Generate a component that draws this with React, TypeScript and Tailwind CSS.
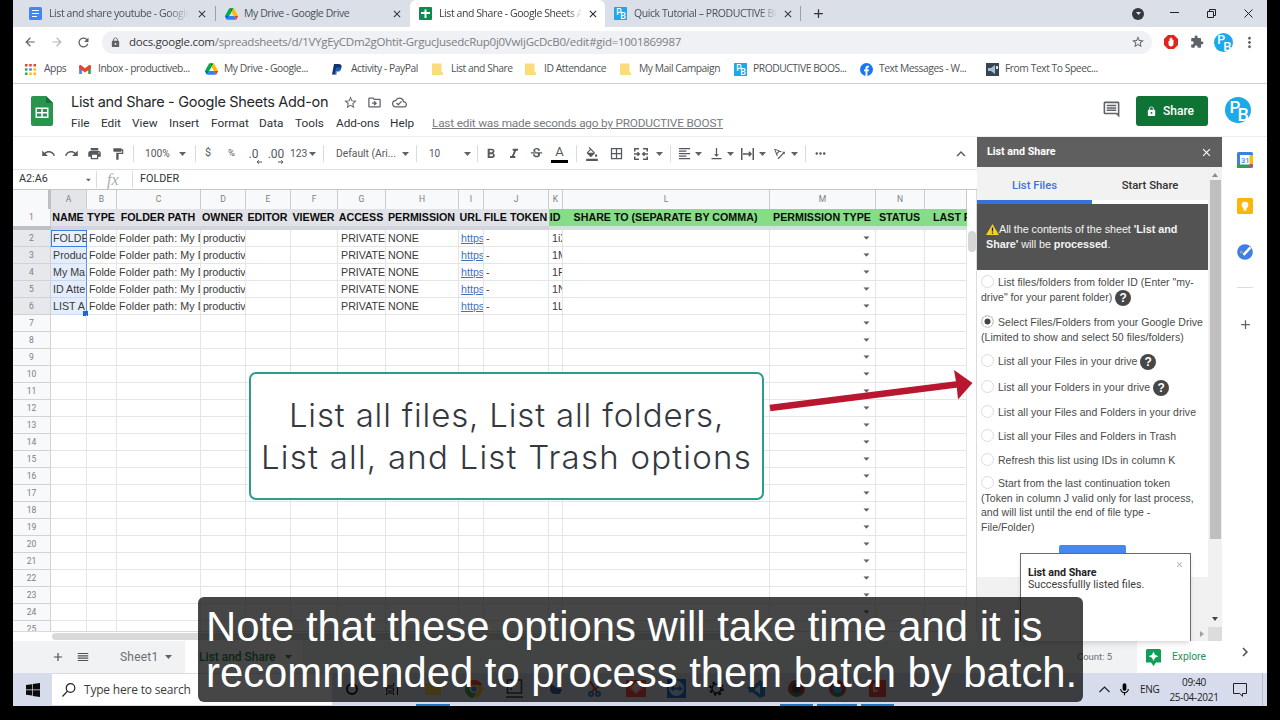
import type { ReactNode } from "react";
import { clsx } from "clsx";
import {
    MdAdd, MdArrowBack, MdArrowForward, MdBorderAll, MdClose, MdExtension, MdFormatAlignLeft, MdFormatBold,
    MdFormatColorFill, MdFormatItalic, MdFormatPaint, MdKeyboardArrowUp, MdChevronRight, MdLock, MdMoreVert,
    MdOutlineCloudDone, MdOutlineComment, MdOutlineDriveFileMove, MdPrint, MdRedo, MdRefresh, MdReorder,
    MdStarBorder, MdStrikethroughS, MdTextRotationAngleup, MdUndo, MdVerticalAlignBottom, MdMoreHoriz, MdMic,
} from "react-icons/md";

const COLS = "grid grid-cols-[38px_36px_30px_84px_45px_45px_47px_48px_73px_25px_65px_14px_207px_106px_49px_42px]";

const letters = ["A", "B", "C", "D", "E", "F", "G", "H", "I", "J", "K", "L", "M", "N", ""];

const headings = [
    "NAME", "TYPE", "FOLDER PATH", "OWNER", "EDITOR", "VIEWER", "ACCESS", "PERMISSION", "URL", "FILE TOKEN",
    "ID", "SHARE TO (SEPARATE BY COMMA)", "PERMISSION TYPE", "STATUS", "LAST R",
];

const names = ["FOLDE", "Produc", "My Ma", "ID Atte", "LIST A"];
const ids = ["1iX", "1M", "1F", "1N", "1L"];

function Caret({ className }: { className?: string }) {
    return (
        <span className={clsx("flex w-3 shrink-0 justify-center", className)}>
            <svg width="7" height="4" viewBox="0 0 7 4" fill="#5f6368"><path d="M0 0h7L3.5 4z" /></svg>
        </span>
    );
}

function Sep({ className }: { className?: string }) {
    return <span className={clsx("h-[17px] w-px shrink-0 bg-[#dadce0]", className)} />;
}

function Tool({ className, children }: { className: string; children: ReactNode }) {
    return <span className={clsx("flex shrink-0 items-center justify-center", className)}>{children}</span>;
}

function DriveIcon() {
    return (
        <svg width="13" height="12" viewBox="0 0 87 78" className="shrink-0">
            <path d="M6.6 66.9l3.8 6.6c.8 1.4 1.9 2.5 3.3 3.3L27.5 53H0c0 1.6.4 3.1 1.2 4.5z" fill="#0066da" />
            <path d="M43.6 25L29.9 1.2c-1.3.8-2.5 1.9-3.3 3.3L1.2 48.5C.4 49.9 0 51.500 0 53h27.500z" fill="#00ac47" />
            <path d="M73.600 76.800c1.300-.8 2.500-1.900 3.300-3.300l9.200-16c.8-1.400 1.200-2.900 1.200-4.500H59.800l5.900 11.500z" fill="#ea4335" />
            <path d="M43.600 25L57.400 1.200C56 .4 54.500 0 52.900 0H34.400c-1.600 0-3.200.4-4.500 1.200z" fill="#00832d" />
            <path d="M59.800 53H27.500L13.700 76.800c1.400.8 2.900 1.200 4.500 1.200h50.900c1.600 0 3.100-.4 4.500-1.200z" fill="#2684fc" />
            <path d="M73.400 26.500L60.700 4.500c-.8-1.400-2-2.500-3.300-3.300L43.600 25l16.200 28h27.500c0-1.600-.4-3.100-1.200-4.500z" fill="#ffba00" />
        </svg>
    );
}

function PbIcon({ size, round }: { size: number; round?: boolean }) {
    return (
        <svg width={size} height={size} viewBox="0 0 26 26" className="shrink-0">
            <rect width="26" height="26" rx={round ? 13 : 1} fill="#1ba9ea" />
            <text x="4.500" y="15.500" fontFamily="Roboto, sans-serif" fontWeight="500" fontSize="17" fill="#fff">P</text>
            <text x="12.500" y="24" fontFamily="Roboto, sans-serif" fontWeight="500" fontSize="18" fill="#fff">B</text>
        </svg>
    );
}

function FolderIcon() {
    return (
        <svg width="11" height="12" viewBox="0 0 11 12" className="shrink-0">
            <path d="M0 .5h9.500v8.500l1.500.5V12H0z" fill="#fbdc7a" />
        </svg>
    );
}

function TabTitle({ className, children }: { className: string; children: ReactNode }) {
    return (
        <span className={clsx("shrink-0 overflow-hidden whitespace-nowrap text-[10.5px] tracking-[-0.42px]", className)}>{children}</span>
    );
}

function TabStrip() {
    return (
        <div className="flex h-[27px] items-center bg-[#dadfe8] font-['Open_Sans',sans-serif] text-[#4d5156]">
            <svg width="13" height="13" viewBox="0 0 13 13" className="ml-4 shrink-0">
                <rect width="13" height="13" rx="1.500" fill="#4285f4" />
                <path d="M3 3.500h7M3 6.500h7M3 9.500h5" stroke="#fff" strokeWidth="1.200" />
            </svg>
            <TabTitle className="ml-[7px] w-[140px] [mask-image:linear-gradient(to_right,#000_85%,transparent)]">List and share youtube - Google</TabTitle>
            <MdClose className="ml-[7px] shrink-0 text-[12px] text-[#333]" />
            <span className="ml-[7px] h-[15px] w-px bg-[#9aa0a6]" />
            <span className="ml-[9px]"><DriveIcon /></span>
            <TabTitle className="ml-[6px] w-[147px]">My Drive - Google Drive</TabTitle>
            <MdClose className="shrink-0 text-[12px] text-[#333]" />
            <div className="ml-[7px] flex h-full w-[195px] shrink-0 items-center rounded-t-md bg-white text-[#3c4043]">
                <svg width="13" height="13" viewBox="0 0 13 13" className="ml-[9px] shrink-0">
                    <rect width="13" height="13" rx="1" fill="#0f8a50" />
                    <path d="M2 6h9M6.500 2.500v8.500" stroke="#fff" strokeWidth="2" />
                </svg>
                <TabTitle className="ml-[7px] w-[143px] [mask-image:linear-gradient(to_right,#000_90%,transparent)]">List and Share - Google Sheets A</TabTitle>
                <MdClose className="ml-[5px] shrink-0 text-[12px] text-[#222]" />
            </div>
            <span className="ml-[9px]"><PbIcon size={13} /></span>
            <TabTitle className="ml-[7px] w-[143px] [mask-image:linear-gradient(to_right,#000_88%,transparent)]">Quick Tutorial – PRODUCTIVE BO</TabTitle>
            <MdClose className="ml-[5px] shrink-0 text-[12px] text-[#333]" />
            <span className="ml-[6px] h-[15px] w-px bg-[#9aa0a6]" />
            <MdAdd className="ml-[10px] text-[15px] text-[#333]" />
            <span className="ml-auto flex size-3 items-center justify-center rounded-full bg-[#35383c]">
                <svg width="5" height="3" viewBox="0 0 5 3" fill="#dfe3ea"><path d="M0 0h5L2.500 3z" /></svg>
            </span>
            <svg width="9" height="9" className="mr-[28px] ml-[26px]" stroke="#222"><path d="M0 3.500h9" /></svg>
            <svg width="9" height="9" className="mr-[28px]" fill="none" stroke="#222"><path d="M.5 2.500h6v6h-6zM2.500 2V.5h6v6H7" /></svg>
            <svg width="9" height="9" className="mr-[14px]" stroke="#222"><path d="M.5.5l8 8M8.500.5l-8 8" /></svg>
        </div>
    );
}

function AddressBar() {
    return (
        <div className="flex h-[30px] items-center bg-white font-['Open_Sans',sans-serif] text-[#5f6368]">
            <MdArrowBack className="ml-[10px] text-[14px]" />
            <MdArrowForward className="ml-[13px] text-[14px] text-[#b4b7bb]" />
            <MdRefresh className="ml-[12px] text-[15px]" />
            <div className="ml-[11px] flex h-[23px] w-[1050px] items-center rounded-full bg-[#f0f1f4]">
                <MdLock className="ml-[8px] text-[11px]" />
                <span className="ml-[8px] text-[11.5px] tracking-[-0.27px] whitespace-nowrap text-[#7a7e83]">
                    <span className="text-[#35383c]">docs.google.com</span>/spreadsheets/d/1VYgEyCDm2gOhtit-GrgucJusedcRup0j0VwIjGcDcB0/edit#gid=1001869987
                </span>
                <MdStarBorder className="mr-[7px] ml-auto text-[14px]" />
            </div>
            <svg width="14" height="14" viewBox="0 0 14 14" className="ml-[12px]">
                <path d="M4 0h6l4 4v6l-4 4H4L0 10V4z" fill="#e1251b" />
                <path d="M4.500 6h1V3.500h1v-1h1v1h1v1.500h1v4c0 1.500-1 2.500-2.500 2.500S4.500 10.500 4.500 9z" fill="#fff" />
            </svg>
            <MdExtension className="ml-[12px] text-[14px]" />
            <span className="ml-[10px]"><PbIcon size={19} round /></span>
            <MdMoreVert className="ml-[8px] text-[17px]" />
        </div>
    );
}

function Bookmark({ className, icon, children }: { className: string; icon: ReactNode; children: ReactNode }) {
    return (
        <span className={clsx("flex shrink-0 items-center whitespace-nowrap", className)}>
            <span className="flex w-[19px] shrink-0">{icon}</span>
            {children}
        </span>
    );
}

function Bookmarks() {
    return (
        <div className="flex h-[27px] items-center border-b border-[#cfd1d4] bg-white pb-[2px] pl-3 font-['Open_Sans',sans-serif] text-[10.3px] tracking-[-0.45px] text-[#4f5357]">
            <Bookmark className="w-[54px]" icon={
                <svg width="11" height="11" viewBox="0 0 11 11">
                    <path d="M0 0h2.500v2.500H0zM8.500 0H11v2.500H8.500zM4.250 0h2.500v2.500h-2.500z" fill="#ea4335" />
                    <path d="M0 4.250h2.500v2.500H0z" fill="#34a853" /><path d="M4.250 4.250h2.500v2.500h-2.500z" fill="#4285f4" />
                    <path d="M8.500 4.250H11v2.500H8.500zM4.250 8.500h2.500V11h-2.500zM8.500 8.500H11V11H8.500z" fill="#fbbc04" />
                    <path d="M0 8.500h2.500V11H0z" fill="#34a853" />
                </svg>
            }>Apps</Bookmark>
            <Bookmark className="w-[126px]" icon={
                <svg width="12" height="9" viewBox="0 0 13 10">
                    <path d="M0 1h3v9H0z" fill="#4285f4" /><path d="M10 1h3v9h-3z" fill="#34a853" />
                    <path d="M0 1.500C0 0 1.500-.3 2.500.6l4 3 4-3c1-.9 2.500-.6 2.500.9V4L6.500 8.200 0 4z" fill="#ea4335" />
                </svg>
            }>Inbox - productiveb...</Bookmark>
            <Bookmark className="w-[127px]" icon={<DriveIcon />}>My Drive - Google...</Bookmark>
            <Bookmark className="w-[100px]" icon={
                <svg width="10" height="11" viewBox="0 0 10 11">
                    <path d="M2 0h4.500C9 0 10 1.500 9.500 3.500 9 6 7.500 7 5 7H4l-.7 3.500H0z" fill="#15306e" />
                    <path d="M4 3.500h5c.5 3-1 4.500-4 4.500l-.6 3H2.500z" fill="#1c73c4" opacity=".7" />
                </svg>
            }>Activity - PayPal</Bookmark>
            <Bookmark className="w-[93px]" icon={<FolderIcon />}>List and Share</Bookmark>
            <Bookmark className="w-[95px]" icon={<FolderIcon />}>ID Attendance</Bookmark>
            <Bookmark className="w-[114px]" icon={<FolderIcon />}>My Mail Campaign</Bookmark>
            <Bookmark className="w-[126px]" icon={<PbIcon size={13} />}>PRODUCTIVE BOOS...</Bookmark>
            <Bookmark className="w-[126px]" icon={
                <svg width="13" height="13" viewBox="0 0 13 13">
                    <circle cx="6.500" cy="6.500" r="6.500" fill="#1877f2" />
                    <path d="M5.500 13V8.300H4V6.500h1.500V5.200c0-1.600.9-2.400 2.300-2.400h1.300v1.600h-.8c-.7 0-.9.4-.9.9v1.200H9l-.3 1.800H7.400V13z" fill="#fff" />
                </svg>
            }>Text Messages - W...</Bookmark>
            <Bookmark className="" icon={
                <svg width="13" height="13" viewBox="0 0 13 13">
                    <rect width="13" height="13" fill="#3b4250" />
                    <path d="M2 5h3l4-3v9L5 8H2z" fill="#9fc3d6" /><path d="M10 3h2v3h-2z" fill="#dfe6ea" />
                </svg>
            }>From Text To Speec...</Bookmark>
        </div>
    );
}

function DocHeader() {
    return (
        <div className="flex h-[53px] border-b border-[#eceded] bg-white">
            <svg width="22" height="30" viewBox="0 0 22 30" className="mt-[12px] ml-[18px] shrink-0">
                <path d="M2 0h13l7 7v21c0 1.100-.9 2-2 2H2c-1.100 0-2-.9-2-2V2C0 .9.900 0 2 0z" fill="#28954f" />
                <path d="M15 0l7 7h-7z" fill="#17713a" />
                <path d="M4.500 11.500h13v10.500h-13zM6 13v3h4.300v-3zm5.800 0v3H16v-3zM6 17.500v3h4.300v-3zm5.800 0v3H16v-3z" fill="#fff" fillRule="evenodd" />
            </svg>
            <div className="ml-[18px] flex flex-1 flex-col">
                <div className="mt-[7px] flex h-[21px] items-center">
                    <span className="w-[272px] font-['Inter',sans-serif] text-[14.5px] tracking-[-0.3px] whitespace-nowrap text-[#26282b]">List and Share - Google Sheets Add-on</span>
                    <MdStarBorder className="mt-px text-[15px] text-[#5f6368]" />
                    <span className="mt-px ml-[9px] text-[15px] text-[#5f6368]"><MdOutlineDriveFileMove /></span>
                    <MdOutlineCloudDone className="mt-px ml-[10px] text-[15px] text-[#5f6368]" />
                </div>
                <div className="mt-[3px] flex h-[18px] items-center font-['Roboto',sans-serif] text-[11.8px] whitespace-nowrap text-[#303336]">
                    <span className="w-[30px]">File</span>
                    <span className="w-[31px]">Edit</span>
                    <span className="w-[37px]">View</span>
                    <span className="w-[42px]">Insert</span>
                    <span className="w-[48px]">Format</span>
                    <span className="w-[36px]">Data</span>
                    <span className="w-[41px]">Tools</span>
                    <span className="w-[54px]">Add-ons</span>
                    <span className="w-[42px]">Help</span>
                    <span className="tracking-[-0.2px] text-[#777b80] underline">Last edit was made seconds ago by PRODUCTIVE BOOST</span>
                </div>
            </div>
            <MdOutlineComment className="mt-[16px] mr-[15px] text-[19px] text-[#5f6368]" />
            <div className="mt-[12px] mr-[17px] flex h-[30px] w-[72px] items-center rounded-[3px] bg-[#107336] font-['Roboto',sans-serif] text-[12px] font-medium text-white">
                <MdLock className="mr-[6px] ml-[10px] text-[11px]" />
                Share
            </div>
            <span className="mt-[13px] mr-4"><PbIcon size={26} round /></span>
        </div>
    );
}

function Toolbar() {
    return (
        <div className="flex h-[33px] items-center border-b border-[#dfe1e4] bg-white pt-px pl-6 font-['Roboto',sans-serif] text-[10.8px] text-[#55595e]">
            <Tool className="w-[23px]"><MdUndo className="text-[15px]" /></Tool>
            <Tool className="w-[23px]"><MdRedo className="text-[15px]" /></Tool>
            <Tool className="w-[23px]"><MdPrint className="text-[15px]" /></Tool>
            <Tool className="w-[23px]"><MdFormatPaint className="text-[14px]" /></Tool>
            <Sep className="ml-1" />
            <span className="ml-[11px] w-[31px] text-[10.3px]">100%</span>
            <Caret />
            <Sep className="ml-[7px]" />
            <Tool className="w-6">$</Tool>
            <Tool className="w-[23px] text-[9.500px]">%</Tool>
            <Tool className="w-[21px] text-[12px]">
                <span className="relative">.0<svg width="6" height="4" className="absolute -right-1 bottom-[-1px]" stroke="#55595e" fill="none"><path d="M6 2H1M3 .3L1 2l2 1.700" /></svg></span>
            </Tool>
            <Tool className="w-[24px] text-[12px]">
                <span className="relative">.00<svg width="6" height="4" className="absolute right-0 bottom-[-1px]" stroke="#55595e" fill="none"><path d="M0 2h5M3 .3L5 2 3 3.700" /></svg></span>
            </Tool>
            <span className="ml-[2px] w-4 text-[10.3px]">123</span>
            <Caret />
            <Sep className="ml-[5px]" />
            <span className="ml-3 w-[63px] whitespace-nowrap text-[10.3px]">Default (Ari...</span>
            <Caret />
            <Sep className="ml-[5px]" />
            <span className="ml-3 w-8 text-[10px]">10</span>
            <Caret />
            <Sep className="ml-[4px]" />
            <Tool className="ml-px w-[23px]"><MdFormatBold className="text-[16px]" /></Tool>
            <Tool className="w-[23px]"><MdFormatItalic className="text-[16px]" /></Tool>
            <Tool className="w-[23px]"><MdStrikethroughS className="text-[15px]" /></Tool>
            <Tool className="w-[23px]">
                <span className="flex h-[19px] w-[17px] flex-col items-center border-b-[3px] border-black text-[13px] leading-[15px]">A</span>
            </Tool>
            <Sep className="ml-[5px]" />
            <Tool className="ml-[2px] w-[25px]"><MdFormatColorFill className="text-[14px]" /></Tool>
            <Tool className="w-[25px]"><MdBorderAll className="text-[15px]" /></Tool>
            <Tool className="w-6">
                <svg width="14" height="12" viewBox="0 0 14 12" fill="none" stroke="#55595e" strokeWidth="1.500">
                    <path d="M5 .75H.75V3.500M9 .75h4.250V3.500M5 11.250H.75V8.500M9 11.250h4.250V8.500M0 6h5M3.500 4.200L5.300 6 3.500 7.800M14 6H9M10.500 4.200L8.700 6l1.800 1.800" />
                </svg>
            </Tool>
            <Caret />
            <Sep className="ml-[5px]" />
            <Tool className="ml-[5px] w-4"><MdFormatAlignLeft className="text-[15px]" /></Tool>
            <Caret />
            <Tool className="ml-1 w-4"><MdVerticalAlignBottom className="text-[15px]" /></Tool>
            <Caret />
            <Tool className="ml-[3px] w-4">
                <svg width="13" height="12" viewBox="0 0 13 12" fill="none" stroke="#55595e" strokeWidth="1.500">
                    <path d="M.75 0v12M12.250 0v12M2 6h8M7.800 3.800L10 6 7.800 8.200" />
                </svg>
            </Tool>
            <Caret className="ml-px" />
            <Tool className="ml-[3px] w-4"><MdTextRotationAngleup className="text-[15px]" /></Tool>
            <Caret className="ml-px" />
            <Sep className="ml-[5px]" />
            <Tool className="ml-1 w-5"><MdMoreHoriz className="text-[15px]" /></Tool>
            <MdKeyboardArrowUp className="mr-[7px] ml-auto text-[18px]" />
        </div>
    );
}

function FormulaBar() {
    return (
        <div className="flex h-5 items-center border-b border-[#c4c7ca] bg-white font-['Roboto',sans-serif] text-[10.8px] text-[#303336]">
            <span className="ml-[6px] w-[63px]">A2:A6</span>
            <Caret className="scale-75" />
            <Sep className="ml-[2px]" />
            <span className="ml-[10px] w-[25px] font-['Liberation_Serif',serif] text-[16px] italic leading-none text-[#a9acb0]">fx</span>
            <Sep />
            <span className="ml-[7px]">FOLDER</span>
        </div>
    );
}

const cell = "overflow-hidden whitespace-nowrap border-r border-b border-[#e4e5e7]";

function Rows() {
    return (
        <>
            {Array.from({ length: 24 }, (_, i) => {
                const row = i + 2;
                const filled = i < 5;
                return (
                    <div key={row} className={clsx(COLS, "h-[17px] shrink-0 font-['Liberation_Sans',sans-serif] text-[10.7px] leading-[16px] text-[#3a3a3a]")}>
                        <span className={clsx("border-r border-b border-[#d0d2d5] text-center font-['Roboto',sans-serif] text-[8.5px] leading-[16px] text-[#7b7f84]", filled ? "bg-[#e6e8ec]" : "bg-[#f8f9fa]")}>{row}</span>
                        <span className={clsx(
                            "relative border-r border-b",
                            i === 0 && "border border-t-[1.5px] border-[#3d7fe0] bg-[#e8f0fc] pl-px leading-[14px]",
                            i > 0 && filled && "border-r-[#5a93e6] border-b-[#c9d9ef] bg-[#e3edfb] pl-[2px]",
                            !filled && "border-[#e4e5e7]",
                        )}>
                            <span className="block overflow-hidden whitespace-nowrap">{filled && names[i]}</span>
                            {i === 4 && <span className="absolute -right-[2px] -bottom-[2px] size-[5px] bg-[#1a66d6]" />}
                        </span>
                        <span className={clsx(cell, "pl-[2px]")}>{filled && "Folde"}</span>
                        <span className={clsx(cell, "pl-[2px] tracking-[0.1px]")}>{filled && "Folder path: My Drive"}</span>
                        <span className={clsx(cell, "pl-[2px] tracking-[-0.1px]")}>{filled && "productive"}</span>
                        <span className={cell} />
                        <span className={cell} />
                        <span className={clsx(cell, "pl-[3px]")}>{filled && "PRIVATE"}</span>
                        <span className={clsx(cell, "pl-[2px]")}>{filled && "NONE"}</span>
                        <span className={clsx(cell, "pl-[2px] text-[#3f74c4] underline")}>{filled && "https"}</span>
                        <span className={clsx(cell, "pl-[2px]")}>{filled && "-"}</span>
                        <span className={clsx(cell, "pl-[3px]")}>{filled && ids[i]}</span>
                        <span className={cell} />
                        <span className={clsx(cell, "flex items-center justify-end pr-[3px]")}><Caret className="scale-90" /></span>
                        <span className={cell} />
                        <span className={cell} />
                    </div>
                );
            })}
        </>
    );
}

function Sheet() {
    return (
        <div className="flex h-[442px] overflow-hidden bg-white">
            <div className="flex w-[954px] shrink-0 flex-col overflow-hidden border-b border-[#d8dadd]">
                <div className={clsx(COLS, "h-[19px] shrink-0 font-['Roboto',sans-serif] text-[8.5px] leading-[19px] text-[#7b7f84]")}>
                    <span className="border-r-[3px] border-b border-[#bdbfc2] bg-[#f8f9fa]" />
                    {letters.map((l, i) => (
                        <span key={i} className={clsx("border-r border-b border-[#c9cbce] text-center", i === 0 ? "bg-[#e3e5e9]" : "bg-[#f8f9fa]")}>{l}</span>
                    ))}
                </div>
                <div className={clsx(COLS, "h-[17px] shrink-0 font-['Liberation_Sans',sans-serif] text-[10.7px] leading-[17px] font-bold text-[#0c0c0c]")}>
                    <span className="border-r border-[#d0d2d5] bg-[#f8f9fa] text-center font-['Roboto',sans-serif] text-[8.5px] leading-[17px] font-normal text-[#7b7f84]">1</span>
                    {headings.map((h, i) => (
                        <span
                            key={h}
                            className={clsx(
                                "flex overflow-hidden whitespace-nowrap",
                                i < 10 ? "bg-[#e1e2e7]" : "bg-[#85dd88]",
                                i === 14 ? "justify-start pl-[8px]" : "justify-center pr-[2px]",
                            )}
                        >
                            {h}
                        </span>
                    ))}
                </div>
                <div className="flex h-1 shrink-0">
                    <span className="w-[38px] bg-[#bdbfc3]" />
                    <span className="w-[498px] bg-[#d2d4de]" />
                    <span className="flex-1 bg-[#d0e4da]" />
                </div>
                <Rows />
            </div>
            <div className="flex flex-1 flex-col items-center border-r border-[#dcdcdc] bg-white pt-[41px]">
                <span className="h-[21px] w-2 rounded-full bg-[#d5d6d8]" />
            </div>
        </div>
    );
}

function Help() {
    return (
        <span className="ml-[3px] inline-flex size-4 items-center justify-center rounded-full bg-[#474747] align-middle text-[12px] leading-none font-bold text-white">?</span>
    );
}

function Option({ className, checked, children }: { className: string; checked?: boolean; children: ReactNode }) {
    return (
        <div className={clsx("pl-1", className)}>
            <span className={clsx(
                "mr-[4px] inline-block size-[13px] rounded-full border border-[#dcdcdc] align-[-2px]",
                checked ? "bg-[#444] shadow-[inset_0_0_0_2.5px_white]" : "bg-white",
            )} />
            {children}
        </div>
    );
}

function Sidebar() {
    return (
        <div className="relative flex w-[245px] shrink-0 flex-col bg-white">
            <div className="flex h-[30px] shrink-0 items-center bg-[#5f5f5f] pl-[10px] font-['Roboto',sans-serif] text-[10.7px] font-bold text-white">
                List and Share
                <MdClose className="mr-[9px] ml-auto text-[13px]" />
            </div>
            <div className="flex min-h-0 flex-1">
                <div className="flex w-[231px] flex-col bg-[#f1f1f1]">
                    <div className="flex h-[37px] shrink-0 bg-[#f2f2f2] text-center font-['Roboto',sans-serif] text-[11.3px] leading-[38px] font-medium text-[#333]">
                        <span className="w-[115px] border-b-4 border-[#3572dc] text-[#3f73dd]">List Files</span>
                        <span className="w-[116px] border-b-4 border-white">Start Share</span>
                    </div>
                    <div className="h-[66px] shrink-0 bg-[#535353] pt-[18px] pl-[9px] font-['Liberation_Sans',sans-serif] text-[10.8px] leading-[14.5px] tracking-[-0.05px] whitespace-nowrap text-[#f4f4f4]">
                        <svg width="13" height="11" viewBox="0 0 13 11" className="inline align-[-2px]">
                            <path d="M6.500 0L13 11H0z" fill="#f3cf1e" />
                            <path d="M6.500 3.500v4M6.500 8.500v1.200" stroke="#222" strokeWidth="1.300" />
                        </svg>
                        All the contents of the sheet <b>'List and</b><br />
                        <b>Share'</b> will be <b>processed</b>.
                    </div>
                    <div className="flex h-[307px] shrink-0 flex-col bg-white font-['Liberation_Sans',sans-serif] text-[10.5px] leading-[14.5px] tracking-[0.03px] whitespace-nowrap text-[#4a4a4a]">
                        <Option className="mt-[5px] h-[40px]">List files/folders from folder ID (Enter "my-<br />drive" for your parent folder)<Help /></Option>
                        <Option className="h-[39px]" checked>Select Files/Folders from your Google Drive<br />(Limited to show and select 50 files/folders)</Option>
                        <Option className="h-[26px]">List all your Files in your drive<Help /></Option>
                        <Option className="h-[25px]">List all your Folders in your drive<Help /></Option>
                        <Option className="h-[24px]">List all your Files and Folders in your drive</Option>
                        <Option className="h-[24px]">List all your Files and Folders in Trash</Option>
                        <Option className="h-[23px]">Refresh this list using IDs in column K</Option>
                        <Option className="h-[69px]">
                            Start from the last continuation token<br />(Token in column J valid only for last process,<br />and will list until the end of file type -<br />File/Folder)
                        </Option>
                        <span className="ml-[82px] h-8 w-[67px] rounded-[2px] bg-[#4688f1]" />
                    </div>
                </div>
                <div className="flex flex-1 flex-col items-center bg-[#f1f1f1]">
                    <svg width="6" height="4" viewBox="0 0 6 4" className="mt-[6px] mb-[3px]" fill="#8b8b8b"><path d="M0 4h6L3 0z" /></svg>
                    <span className="h-[359px] w-[11px] bg-[#bfbfbf]" />
                    <svg width="6" height="4" viewBox="0 0 6 4" className="mt-auto mb-[6px]" fill="#444"><path d="M0 0h6L3 4z" /></svg>
                    <span className="h-[14px] w-[14px] bg-[#dcdcdc]" />
                </div>
            </div>
            {/* Toast over the panel */}
            <div className="absolute top-[416px] left-[43px] flex h-[88px] w-[171px] flex-col border border-b-0 border-[#6a6a6a] bg-white pl-[7px] font-['Roboto',sans-serif] text-[10.7px] leading-[12px] text-[#3c3c3c] shadow-md">
                <MdClose className="mt-[6px] mr-[6px] self-end text-[9px] text-[#aaa]" />
                <b className="-mt-[2px] text-[#222]">List and Share</b>
                <span>Successfullly listed files.</span>
            </div>
            <svg width="4" height="6" viewBox="0 0 4 6" className="absolute top-[494px] left-[223px]" fill="#a0a0a0"><path d="M0 0l4 3-4 3z" /></svg>
        </div>
    );
}

function SheetTabs() {
    return (
        <div className="flex h-8 items-center bg-[#f0f2f3] font-['Roboto',sans-serif] text-[12px] text-[#6a6e73]">
            <MdAdd className="ml-[38px] text-[14px] text-[#4c4f53]" />
            <MdReorder className="ml-[11px] text-[14px] text-[#4c4f53]" />
            <span className="ml-[30px] w-[42px] tracking-[0.2px]">Sheet1</span>
            <Caret />
            <span className="ml-[11px] flex h-full w-[118px] items-center bg-white pl-[14px] font-medium text-[#188038]">
                <span className="w-[83px]">List and Share</span>
                <Caret />
            </span>
            <span className="ml-auto w-[60px] text-[9.5px]">Count: 5</span>
            <span className="flex h-full w-[85px] items-center bg-white pl-[9px] text-[10.3px] text-[#1e9157]">
                <svg width="15" height="17" viewBox="0 0 15 17" className="mr-[11px]">
                    <path d="M1.500 0h12A1.500 1.500 0 0 1 15 1.500v12h-5L7.500 17 5 13.500H0v-12A1.500 1.500 0 0 1 1.500 0z" fill="#0f9d58" />
                    <path d="M7.500 2.500L9 5.800l3.300 1.500L9 8.800l-1.500 3.300L6 8.800 2.700 7.300 6 5.800z" fill="#fff" />
                </svg>
                Explore
            </span>
        </div>
    );
}

function SidePanel() {
    return (
        <div className="flex w-[45px] flex-col items-center bg-white pl-px">
            <svg width="16" height="16" viewBox="0 0 16 16" className="mt-[15px]">
                <rect width="16" height="16" rx="1.500" fill="#3f7fe8" />
                <path d="M12 3h4v9h-4z" fill="#fbbc04" /><path d="M0 12h12v4H0z" fill="#2e9e50" /><path d="M12 12h4l-4 4z" fill="#ea4335" />
                <rect x="3" y="3" width="9.500" height="9.500" fill="#fff" />
                <text x="4" y="10.500" fontFamily="Roboto, sans-serif" fontWeight="500" fontSize="7.500" fill="#4285f4">31</text>
            </svg>
            <svg width="16" height="16" viewBox="0 0 16 16" className="mt-[30px]">
                <rect width="16" height="16" rx="1.500" fill="#fbb60c" />
                <circle cx="8" cy="7" r="3.300" fill="#fff" /><path d="M6.500 10h3v2.500h-3z" fill="#fff" />
            </svg>
            <svg width="16" height="16" viewBox="0 0 16 16" className="mt-[30px]">
                <circle cx="8" cy="8" r="7.800" fill="#3d7fe8" />
                <path d="M6.500 10.800l7-7.500" stroke="#fff" strokeWidth="2.500" /><circle cx="4.300" cy="8" r="1.500" fill="#a9a36a" />
            </svg>
            <span className="mt-[27px] h-px w-4 bg-[#dadce0]" />
            <MdAdd className="mt-[29px] text-[15px] text-[#5f6368]" />
            <MdChevronRight className="mt-auto mb-[12px] text-[18px] text-[#4c4f53]" />
        </div>
    );
}

function TaskIcon({ className, children }: { className: string; children?: ReactNode }) {
    return (
        <span className={clsx("flex h-full shrink-0 flex-col items-center justify-center border-b-2", className)}>{children}</span>
    );
}

function Taskbar() {
    return (
        <div className="flex h-[33px] items-center bg-[#d6dceb] font-['Open_Sans',sans-serif]">
            <span className="flex w-[39px] justify-center">
                <svg width="14" height="14" viewBox="0 0 14 14" fill="#0c0c0c">
                    <path d="M0 2l6-.8v5.300H0zM6.700 1.100L14 0v6.500H6.700zM0 7.300h6v5.300L0 11.800zM6.700 7.300H14V14l-7.300-1.100z" />
                </svg>
            </span>
            <div className="flex h-[31px] w-[280px] items-center bg-white">
                <svg width="14" height="14" viewBox="0 0 14 14" className="ml-[10px]" fill="none" stroke="#222" strokeWidth="1.200">
                    <circle cx="8.500" cy="5" r="4.300" /><path d="M5.500 8.200L.5 13.500" />
                </svg>
                <span className="ml-[8px] text-[12px] tracking-[-0.2px] text-[#3c3c3c]">Type here to search</span>
            </div>
            <TaskIcon className="w-10 border-transparent"><span className="size-3 rounded-full border-2 border-black" /></TaskIcon>
            <TaskIcon className="mr-1 w-10 border-transparent">
                <svg width="13" height="12" fill="none" stroke="#000"><path d="M.5 0v3h7V0M.5 5h7v3h-7zM.5 12v-2h7v2M11.500 2v10" /></svg>
            </TaskIcon>
            <TaskIcon className="w-[34px] border-[#1c73c4]"><span className="h-3 w-4 bg-[#f4c63b]" /></TaskIcon>
            <TaskIcon className="ml-1 w-10 border-transparent">
                <svg width="18" height="18" viewBox="0 0 18 18">
                    <circle cx="9" cy="9" r="9" fill="#f1b928" /><path d="M1.200 4.500A9 9 0 0 1 17 5H9a4 4 0 0 0-4 3.500z" fill="#e33e2e" />
                    <path d="M1.200 4.500A9 9 0 0 0 8 18l4-6.500a4 4 0 0 1-6.500-.5z" fill="#2da14c" /><circle cx="9" cy="9" r="3.500" fill="#3f7fe8" stroke="#fff" />
                </svg>
            </TaskIcon>
            <TaskIcon className="w-10 border-transparent">
                <svg width="19" height="19" fill="none" stroke="#333" strokeWidth="1.500"><path d="M2.500 1h14v13h-14zM1 18h17M6 5v2M6 9v2" /></svg>
            </TaskIcon>
            <TaskIcon className="w-[41px] border-transparent">
                <svg width="14" height="14" fill="#3450a0"><path d="M3 0l1.500 3L9 6l5 1-2 5H5L2 9z" /></svg>
            </TaskIcon>
            <TaskIcon className="w-10 border-transparent">
                <svg width="16" height="16" fill="none" stroke="#c33" strokeWidth="2"><path d="M3 0l7 11M14 4L5 10" /><circle cx="4" cy="13" r="2" stroke="#2d6fc0" /><circle cx="11" cy="13" r="2" stroke="#2d6fc0" /></svg>
            </TaskIcon>
            <TaskIcon className="w-[41px] border-transparent"><span className="h-[17px] w-5 bg-[#ef4136] px-[6px] py-[4px]"><span className="block size-2 rotate-45 bg-white/70" /></span></TaskIcon>
            <TaskIcon className="w-10 border-transparent">
                <svg width="19" height="19"><rect width="19" height="19" fill="#1467c8" /><circle cx="9.500" cy="9.500" r="7.500" fill="#fff" opacity=".7" /><path d="M3 9.500l4-3v2h5v-2l4 3-4 3v-2H7v2z" fill="#1467c8" /></svg>
            </TaskIcon>
            <TaskIcon className="w-10 border-transparent">
                <svg width="15" height="15" fill="none" stroke="#000"><circle cx="7.500" cy="7.500" r="4.500" strokeWidth="1.500" /><circle cx="7.500" cy="7.500" r="6.300" strokeWidth="2" strokeDasharray="2.500 2.450" /></svg>
            </TaskIcon>
            <TaskIcon className="w-10 border-transparent">
                <svg width="18" height="18" fill="#1478c8"><path d="M13 0l5 2v14l-5 2L0 8l2-2 11 8V5L3 13l-2-2z" /></svg>
            </TaskIcon>
            <TaskIcon className="ml-1 w-[33px] border-[#1c73c4]"><span className="size-[17px] rounded-full border-4 border-[#b33] border-b-[#2a7a3c] bg-[#333]" /></TaskIcon>
            <TaskIcon className="ml-1 w-[40px] border-[#1c73c4]"><span className="size-[17px] rounded-full border-4 border-[#b33] border-b-[#2a7a3c] bg-[#2ba4d8]" /></TaskIcon>
            <TaskIcon className="ml-1 w-[33px] border-[#1c73c4]"><span className="size-[17px] bg-[#e03a2c] p-1"><span className="block h-2 w-[5px] border-b-2 border-l-2 border-white/60" /></span></TaskIcon>
            <svg width="11" height="7" viewBox="0 0 11 7" className="ml-auto" fill="none" stroke="#222" strokeWidth="1.200"><path d="M.5 6l5-5 5 5" /></svg>
            <MdMic className="ml-[7px] text-[15px] text-black" />
            <span className="ml-[8px] w-[29px] text-[10px] tracking-[-0.3px] text-[#222]">ENG</span>
            <span className="flex w-[50px] flex-col items-center text-[10px] leading-[15px] tracking-[-0.3px] whitespace-nowrap text-[#222]">
                <span>09:40</span>
                <span>25-04-2021</span>
            </span>
            <svg width="14" height="14" viewBox="0 0 14 14" className="mr-[15px] ml-[14px]" fill="none" stroke="#222"><path d="M.5.5h13v10H9.500v2.800l-2.800-2.800H.5z" /></svg>
            <span className="mr-[4px] h-full w-px bg-[#b9bfcc]" />
        </div>
    );
}

export default function App() {
    return (
        <div className="relative h-[720px] w-[1280px] overflow-hidden bg-black px-[13px]">
            <TabStrip />
            <AddressBar />
            <Bookmarks />
            <DocHeader />
            <div className="flex h-[536px]">
                <div className="flex w-[1209px] shrink-0 flex-col">
                    <div className="flex h-[504px]">
                        <div className="flex w-[964px] shrink-0 flex-col bg-white">
                            <Toolbar />
                            <FormulaBar />
                            <Sheet />
                            <div className="flex h-[9px] items-center bg-white pl-[39px]">
                                <span className="h-[7px] w-[700px] rounded-full bg-[#d8d9da]" />
                            </div>
                        </div>
                        <Sidebar />
                    </div>
                    <SheetTabs />
                </div>
                <SidePanel />
            </div>
            <Taskbar />

            {/* Callout and arrow */}
            <div className="absolute top-[372px] left-[249px] flex h-[128px] w-[515px] flex-col items-center justify-center rounded-[7px] border-2 border-[#2c9c8e] bg-white font-['Inter',sans-serif] text-[33px] leading-[42px] font-light whitespace-nowrap text-[#35393f]">
                <span className="tracking-[0.85px]">List all files, List all folders,</span>
                <span className="tracking-[1.23px]">List all, and List Trash options</span>
            </div>
            <svg width="210" height="50" viewBox="0 0 210 50" className="absolute top-[365px] left-[766px]">
                <path d="M4 43L194 19" stroke="#b9172f" strokeWidth="6.500" />
                <path d="M206.500 18L192 34.500 190.500 19.500 188 5z" fill="#b9172f" />
            </svg>

            {/* Caption */}
            <div className="absolute top-[597px] left-[198px] h-[105px] w-[885px] rounded-md bg-[#080808]/75 pt-[7px] pl-2 font-['Liberation_Sans',sans-serif] text-[41.8px] leading-[46px] whitespace-nowrap text-white">
                <div>Note that these options will take time and it is</div>
                <div>recommended to process them batch by batch.</div>
            </div>
        </div>
    );
}
